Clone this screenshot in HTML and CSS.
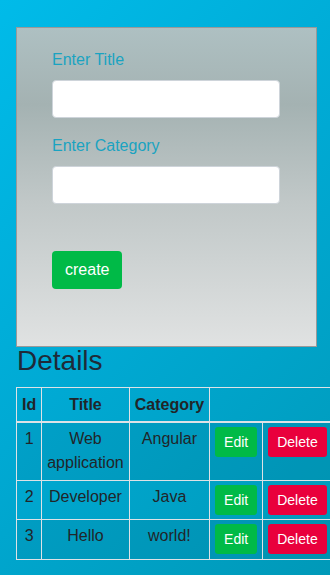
FILE: index.html
```html
<!DOCTYPE html>
<html lang="en">
<head>
<meta charset="utf-8">
<title>Details</title>
<link rel="stylesheet" href="styles.css">
</head>
<body>
<div class="page">
  <form class="card">
    <div class="group">
      <label class="label" for="title">Enter Title</label>
      <input class="field" id="title" type="text">
    </div>
    <div class="group">
      <label class="label" for="category">Enter Category</label>
      <input class="field" id="category" type="text">
    </div>
    <button type="button" class="btn btn-create">create</button>
  </form>
  <h3 class="heading">Details</h3>
  <table class="grid">
    <thead>
      <tr><th>Id</th><th>Title</th><th>Category</th><th colspan="2"></th></tr>
    </thead>
    <tbody>
      <tr><td>1</td><td>Web application</td><td>Angular</td><td><button class="btn-sm btn-edit">Edit</button></td><td><button class="btn-sm btn-delete">Delete</button></td></tr>
      <tr><td>2</td><td>Developer</td><td>Java</td><td><button class="btn-sm btn-edit">Edit</button></td><td><button class="btn-sm btn-delete">Delete</button></td></tr>
      <tr><td>3</td><td>Hello</td><td>world!</td><td><button class="btn-sm btn-edit">Edit</button></td><td><button class="btn-sm btn-delete">Delete</button></td></tr>
    </tbody>
  </table>
</div>
</body>
</html>
```
FILE: styles.css
```css
html, body {
  margin: 0;
  padding: 0;
  overflow: hidden;
}
body {
  font-family: "Liberation Sans", Arial, sans-serif;
  font-size: 16px;
  line-height: 1.5;
  color: #212529;
  min-height: 575px;
  background: linear-gradient(135deg, #00bbe9 0%, #00a9d3 50%, #0099b8 100%);
}
.page {
  padding: 27px 0 16px 16px;
  width: 301px;
}
.card {
  box-sizing: border-box;
  height: 320px;
  border: 1px solid #999;
  padding: 20px 36px 0 35px;
  background: linear-gradient(to bottom, #aec0c2 0%, #a4b2b2 24%, #c1c8c8 55%, #e0e2e2 100%);
}
.group {
  margin-bottom: 16px;
}
.label {
  display: block;
  color: #1aa3c1;
  margin-bottom: 8px;
}
.field {
  display: block;
  box-sizing: border-box;
  width: 100%;
  height: 38px;
  border: 1px solid #ced4da;
  border-radius: 4px;
  background: #fff;
  padding: 6px 12px;
  font: inherit;
}
.btn {
  margin-top: 31px;
  font-family: inherit;
  font-size: 16px;
  line-height: 24px;
  padding: 6px 12px;
  border: 1px solid transparent;
  border-radius: 4px;
  color: #fff;
}
.btn-create {
  background: #00ba47;
}
.heading {
  margin: 0 0 12px 1px;
  font-size: 28px;
  font-weight: 400;
  line-height: 28px;
  color: #1f2a38;
}
.grid {
  width: 100%;
  border-collapse: collapse;
  border: 1px solid #dee2e6;
}
.grid th, .grid td {
  border: 1px solid #dee2e6;
  padding: 4.3px 5px;
  line-height: 24px;
  text-align: center;
  vertical-align: top;
}
.grid thead th {
  padding: 4.5px 5px;
  border-bottom: 2px solid #dee2e6;
  font-weight: 700;
}
.grid tbody tr:nth-child(odd) {
  background: rgba(0, 0, 0, 0.05);
}
.btn-sm {
  display: block;
  font-family: inherit;
  font-size: 14px;
  line-height: 20px;
  padding: 4px 8px;
  border: 1px solid transparent;
  border-radius: 3.2px;
  color: #fff;
}
.btn-edit {
  background: #00ba47;
}
.btn-delete {
  background: #e9003c;
}
```
